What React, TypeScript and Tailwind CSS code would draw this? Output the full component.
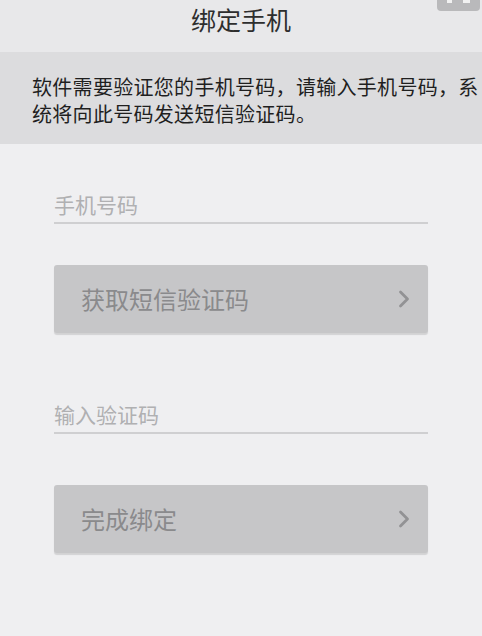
import { ChevronRight } from "lucide-react";

const cjk = { fontFamily: '"Noto Sans CJK SC", "Noto Sans", sans-serif' };

function Field({ placeholder }: { placeholder: string }) {
  return (
    <div className="border-b-2 border-[#cfcfd1] pb-[4px]">
      <input
        placeholder={placeholder}
        className="w-full bg-transparent text-[21px] leading-[28px] text-[#333] placeholder:text-[#b0b0b2] outline-none"
        style={cjk}
      />
    </div>
  );
}

function ActionButton({ label }: { label: string }) {
  return (
    <button className="flex h-[68px] w-full items-center justify-between rounded-[3px] bg-[#c6c6c8] pl-[27px] pr-[10px] text-[24px] text-[#8a8a8c] shadow-[0_2px_1px_rgba(0,0,0,0.12)]">
      <span>{label}</span>
      <ChevronRight size={28} strokeWidth={2.4} className="text-[#929294]" />
    </button>
  );
}

export default function App() {
  return (
    <div className="min-h-screen w-[482px] bg-[#efeff1]" style={cjk}>
      {/* Title bar */}
      <header className="relative flex h-[52px] items-center justify-center bg-[#e8e8ea]">
        <h1 className="text-[25px] font-normal text-[#2e2e2e] -mt-[12px]">绑定手机</h1>
        <div className="absolute right-[2px] top-0 flex h-[11px] w-[43px] items-start justify-center gap-[11px] rounded-b-[4px] bg-[#b9b9bb]">
          <span className="h-[3px] w-[5px] bg-white/80" />
          <span className="h-[3px] w-[7px] bg-white/80" />
        </div>
      </header>

      {/* Notice */}
      <div className="bg-[#dcdcde] pb-[17px] pl-[32px] pt-[21px]">
        <p className="text-[20px] leading-[27px] tracking-[0.3px] text-[#1f1f1f]">
          软件需要验证您的手机号码，请输入手机号码，系统将向此号码发送短信验证码。
        </p>
      </div>

      {/* Form */}
      <div className="flex flex-col px-[54px] pt-[46px]">
        <Field placeholder="手机号码" />
        <div className="mt-[41px]">
          <ActionButton label="获取短信验证码" />
        </div>
        <div className="mt-[67px]">
          <Field placeholder="输入验证码" />
        </div>
        <div className="mt-[51px]">
          <ActionButton label="完成绑定" />
        </div>
      </div>
    </div>
  );
}
